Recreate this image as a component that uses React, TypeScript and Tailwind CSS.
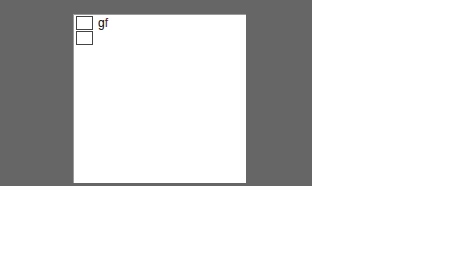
export default function App() {
  return (
    <div className="w-[474px] h-[266px] bg-white" style={{ fontFamily: '"Liberation Sans", Arial, sans-serif' }}>
      <div className="w-[312px] h-[186px] bg-[#666666] pt-[14px] pl-[73px]">
        <div className="w-[173px] h-[169px] bg-white border-l border-t border-[#9a9a9a] pl-[2px] pt-[1px] flex flex-col gap-[1px]">
          <div className="flex items-center h-[14px]">
            <span className="w-[17px] h-[14px] border border-[#444] bg-white" />
            <span className="ml-[5px] text-[12px] text-black leading-none">
              g<span className="text-[#5a1a1a]">f</span>
            </span>
          </div>
          <div className="flex items-center h-[14px]">
            <span className="w-[17px] h-[14px] border border-[#444] bg-white" />
          </div>
        </div>
      </div>
    </div>
  )
}
